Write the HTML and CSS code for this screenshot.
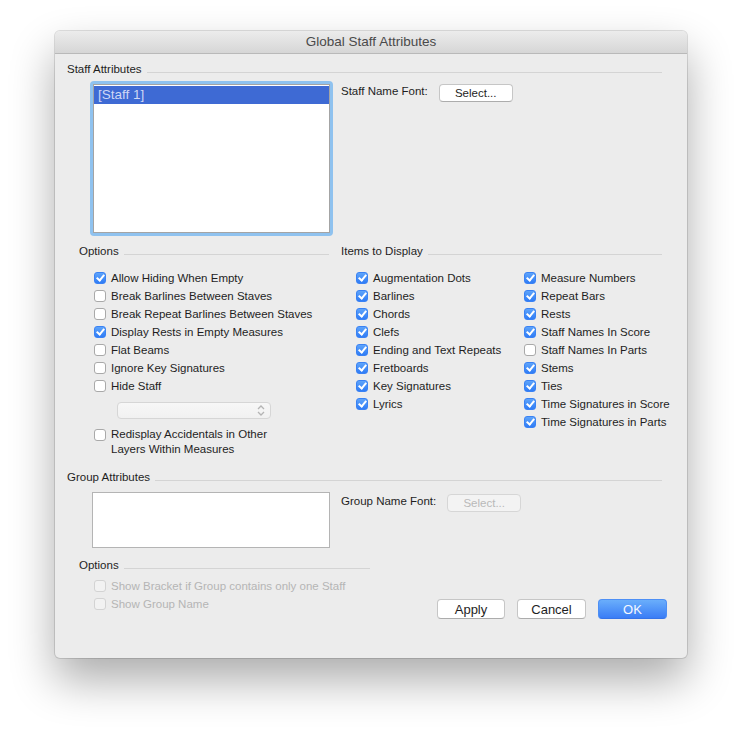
FILE: index.html
```html
<!DOCTYPE html>
<html lang="en">
<head>
  <meta charset="UTF-8" />
  <meta name="viewport" content="width=device-width, initial-scale=1.0"/>
  <title>Global Staff Attributes</title>
  <link rel="stylesheet" href="styles.css">
</head>
<body>
  <div class="window">
    <div class="titlebar">Global Staff Attributes</div>

    <div class="content">
      <div class="group-head">Staff Attributes</div>
      <div class="attr-row">
        <div class="list-focus">
          <div class="list">
            <div class="list-item selected">[Staff 1]</div>
          </div>
        </div>
        <div class="font-pick">
          <span class="font-label">Staff Name Font:</span>
          <button class="select-button">Select...</button>
        </div>
      </div>

      <div class="options-row">
        <div class="options-col">
          <div class="group-head">Options</div>
          <div class="checks">
            <label class="check"><input type="checkbox" checked> Allow Hiding When Empty</label>
            <label class="check"><input type="checkbox"> Break Barlines Between Staves</label>
            <label class="check"><input type="checkbox"> Break Repeat Barlines Between Staves</label>
            <label class="check"><input type="checkbox" checked> Display Rests in Empty Measures</label>
            <label class="check"><input type="checkbox"> Flat Beams</label>
            <label class="check"><input type="checkbox"> Ignore Key Signatures</label>
            <label class="check"><input type="checkbox"> Hide Staff</label>
          </div>
          <div class="popup">
            <svg width="8" height="11" viewBox="0 0 8 11">
              <path d="M1 4 L4 1 L7 4 M1 7 L4 10 L7 7" fill="none" stroke="#b4b4b4" stroke-width="1.3"/>
            </svg>
          </div>
          <label class="check two-line"><input type="checkbox"> <span>Redisplay Accidentals in Other<br>Layers Within Measures</span></label>
        </div>

        <div class="items-col">
          <div class="group-head">Items to Display</div>
          <div class="items-grid">
            <div class="checks">
              <label class="check"><input type="checkbox" checked> Augmentation Dots</label>
              <label class="check"><input type="checkbox" checked> Barlines</label>
              <label class="check"><input type="checkbox" checked> Chords</label>
              <label class="check"><input type="checkbox" checked> Clefs</label>
              <label class="check"><input type="checkbox" checked> Ending and Text Repeats</label>
              <label class="check"><input type="checkbox" checked> Fretboards</label>
              <label class="check"><input type="checkbox" checked> Key Signatures</label>
              <label class="check"><input type="checkbox" checked> Lyrics</label>
            </div>
            <div class="checks">
              <label class="check"><input type="checkbox" checked> Measure Numbers</label>
              <label class="check"><input type="checkbox" checked> Repeat Bars</label>
              <label class="check"><input type="checkbox" checked> Rests</label>
              <label class="check"><input type="checkbox" checked> Staff Names In Score</label>
              <label class="check"><input type="checkbox"> Staff Names In Parts</label>
              <label class="check"><input type="checkbox" checked> Stems</label>
              <label class="check"><input type="checkbox" checked> Ties</label>
              <label class="check"><input type="checkbox" checked> Time Signatures in Score</label>
              <label class="check"><input type="checkbox" checked> Time Signatures in Parts</label>
            </div>
          </div>
        </div>
      </div>

      <div class="group-head group-attr">Group Attributes</div>
      <div class="attr-row group-row">
        <div class="list group-list"></div>
        <div class="font-pick">
          <span class="font-label">Group Name Font:</span>
          <button class="select-button" disabled>Select...</button>
        </div>
      </div>

      <div class="bottom-row">
        <div class="group-options">
          <div class="group-head">Options</div>
          <div class="checks">
            <label class="check disabled"><input type="checkbox" disabled> Show Bracket if Group contains only one Staff</label>
            <label class="check disabled"><input type="checkbox" disabled> Show Group Name</label>
          </div>
        </div>
        <div class="buttons">
          <button class="push apply">Apply</button>
          <button class="push">Cancel</button>
          <button class="push default">OK</button>
        </div>
      </div>
    </div>
  </div>
</body>
</html>
```

FILE: styles.css
```css
html {
  background: #fff;
}

body {
  margin: 0;
  min-height: 739px;
  padding: 31px 0 0 55px;
  box-sizing: border-box;
  font-family: 'Liberation Sans', Arial, sans-serif;
  font-size: 11.5px;
  color: #1e1e1e;
}

.window {
  width: 632px;
  height: 627px;
  background: #ececec;
  border-radius: 5px;
  overflow: hidden;
  box-shadow: 0 22px 45px rgba(0, 0, 0, 0.33), 0 0 0 1px rgba(0, 0, 0, 0.12);
}

.titlebar {
  height: 23px;
  box-sizing: border-box;
  border-bottom: 1px solid #b9b9b9;
  background: linear-gradient(#ececec, #d6d6d6);
  text-align: center;
  font-size: 13.5px;
  line-height: 22px;
  color: #4a4a4a;
}

.content {
  padding: 7px 25px 0 12px;
}

.group-head {
  display: flex;
  align-items: center;
  gap: 5px;
  line-height: 16px;
}

.group-head::after {
  content: "";
  flex: 1;
  border-top: 1px solid #d4d4d4;
  margin-top: 6px;
}

.attr-row {
  display: flex;
  margin-top: 4px;
}

.list-focus {
  margin-left: 23px;
  padding: 3px;
  background: #8fc2ef;
  border-radius: 4px;
}

.list {
  width: 235px;
  height: 147px;
  border: 1px solid #a4a4a4;
  background: #fff;
}

.list-item {
  height: 18px;
  line-height: 18px;
  padding-left: 4px;
  margin-top: 1px;
  font-size: 13.5px;
}

.list-item.selected {
  background: #3e6ad4;
  color: #cfd7f4;
}

.font-pick {
  display: flex;
  align-items: flex-start;
  gap: 11px;
  margin: 3px 0 0 8px;
}

.font-label {
  line-height: 14px;
}

.select-button {
  width: 74px;
  height: 18px;
  padding: 0;
  font-family: inherit;
  font-size: 11.5px;
  color: #1e1e1e;
  background: #fff;
  border: 1px solid #c6c6c6;
  border-bottom-color: #acacac;
  border-radius: 4px;
}

.select-button:disabled {
  background: #f3f3f3;
  border-color: #d6d6d6;
  color: #b9b9b9;
}

.options-row {
  display: flex;
  margin-top: 7px;
}

.options-col {
  flex: none;
  margin-left: 12px;
  width: 250px;
}

.items-col {
  margin-left: 12px;
  flex: 1;
  min-width: 0;
}

.checks {
  margin-top: 10px;
}

.check {
  display: flex;
  align-items: center;
  height: 18px;
  padding-left: 15px;
  white-space: nowrap;
}

.check input {
  appearance: none;
  -webkit-appearance: none;
  position: relative;
  box-sizing: border-box;
  width: 12px;
  height: 12px;
  margin: 0 5px 0 0;
  flex: none;
  background: #fff;
  border: 1px solid #a9a9a9;
  border-radius: 3px;
}

.check input:checked {
  background: linear-gradient(#5ea4fa, #2f7cf6);
  border-color: #3a82f4;
}

.check input:checked::after {
  content: "";
  position: absolute;
  left: 3px;
  top: 0px;
  width: 3px;
  height: 6px;
  border: solid #fff;
  border-width: 0 2px 2px 0;
  transform: rotate(40deg);
}

.check.disabled {
  color: #b5b5b5;
}

.check input:disabled {
  background: #f2f2f2;
  border-color: #d3d3d3;
}

.two-line {
  align-items: flex-start;
  height: auto;
  line-height: 15px;
  margin-top: 8px;
}

.two-line input {
  margin-top: 2px;
}

.popup {
  display: flex;
  align-items: center;
  justify-content: flex-end;
  box-sizing: border-box;
  width: 154px;
  height: 17px;
  margin: 7px 0 0 38px;
  padding-right: 5px;
  background: linear-gradient(#f7f7f7, #f1f1f1);
  border: 1px solid #d6d6d6;
  border-radius: 4px;
}

.items-grid {
  display: grid;
  grid-template-columns: 168px 1fr;
}

.group-attr {
  margin-top: 12px;
}

.group-row {
  margin-top: 7px;
}

.group-list {
  margin-left: 25px;
  width: 236px;
  height: 54px;
  border-color: #b4b4b4;
}

.group-row .font-pick {
  margin: 2px 0 0 11px;
  gap: 11px;
}

.bottom-row {
  display: flex;
  margin-top: 9px;
}

.group-options {
  flex: none;
  margin-left: 12px;
  width: 291px;
}

.group-options .checks {
  margin-top: 4px;
}

.buttons {
  display: flex;
  gap: 12px;
  margin: 42px -5px 0 auto;
}

.push {
  width: 69px;
  height: 20px;
  padding: 0;
  font-family: inherit;
  font-size: 13px;
  color: #1e1e1e;
  background: #fff;
  border: 1px solid #c6c6c6;
  border-bottom-color: #acacac;
  border-radius: 4px;
}

.push.apply {
  width: 68px;
}

.push.default {
  color: #f5f8ff;
  background: linear-gradient(#6aaefb, #3a7df6);
  border-color: #4d8ff5;
  border-bottom-color: #3573e8;
}
```
